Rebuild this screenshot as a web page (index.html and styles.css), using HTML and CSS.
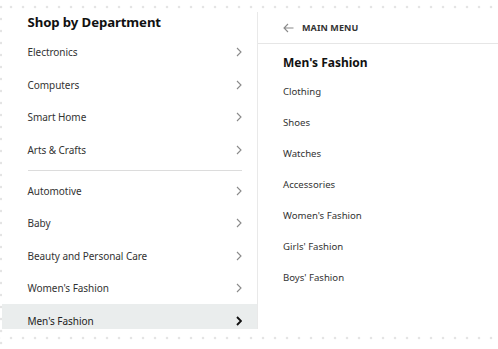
FILE: index.html
```html
<!DOCTYPE html>
<html>
<head>
<meta charset="utf-8">
<link rel="stylesheet" href="styles.css">
</head>
<body>
<div class="frame">
  <nav class="dept">
    <h2 class="dept-title">Shop by Department</h2>
    <ul class="dept-list">
      <li class="dept-item"><span>Electronics</span><svg class="chev" viewBox="0 0 6 10"><path d="M1 1L5 5L1 9"/></svg></li>
      <li class="dept-item"><span>Computers</span><svg class="chev" viewBox="0 0 6 10"><path d="M1 1L5 5L1 9"/></svg></li>
      <li class="dept-item"><span>Smart Home</span><svg class="chev" viewBox="0 0 6 10"><path d="M1 1L5 5L1 9"/></svg></li>
      <li class="dept-item"><span>Arts &amp; Crafts</span><svg class="chev" viewBox="0 0 6 10"><path d="M1 1L5 5L1 9"/></svg></li>
    </ul>
    <hr class="dept-divider">
    <ul class="dept-list">
      <li class="dept-item"><span>Automotive</span><svg class="chev" viewBox="0 0 6 10"><path d="M1 1L5 5L1 9"/></svg></li>
      <li class="dept-item"><span>Baby</span><svg class="chev" viewBox="0 0 6 10"><path d="M1 1L5 5L1 9"/></svg></li>
      <li class="dept-item"><span>Beauty and Personal Care</span><svg class="chev" viewBox="0 0 6 10"><path d="M1 1L5 5L1 9"/></svg></li>
      <li class="dept-item"><span>Women's Fashion</span><svg class="chev" viewBox="0 0 6 10"><path d="M1 1L5 5L1 9"/></svg></li>
      <li class="dept-item active"><span>Men's Fashion</span><svg class="chev" viewBox="0 0 6 10"><path d="M1 1L5 5L1 9"/></svg></li>
    </ul>
  </nav>
  <section class="sub">
    <div class="sub-head">
      <svg class="back" viewBox="0 0 11 10"><path d="M1 5H10.5M5 1L1 5L5 9"/></svg>
      <span class="sub-head-label">MAIN MENU</span>
    </div>
    <h3 class="sub-title">Men's Fashion</h3>
    <ul class="sub-list">
      <li class="sub-item">Clothing</li>
      <li class="sub-item">Shoes</li>
      <li class="sub-item">Watches</li>
      <li class="sub-item">Accessories</li>
      <li class="sub-item">Women's Fashion</li>
      <li class="sub-item">Girls' Fashion</li>
      <li class="sub-item">Boys' Fashion</li>
    </ul>
  </section>
</div>
</body>
</html>
```
FILE: styles.css
```css
html, body {
  margin: 0;
  padding: 0;
}
body {
  width: 498px;
  height: 349px;
  overflow: hidden;
  font-family: "Noto Sans", "Open Sans", sans-serif;
  color: #333;
  background-color: #fff;
  background-image:
    url("data:image/svg+xml,%3Csvg xmlns='http://www.w3.org/2000/svg' width='12' height='12'%3E%3Cpath d='M6 4.8v2.4M4.8 6h2.4' stroke='%23d6d6d6' stroke-width='0.8'/%3E%3C/svg%3E"),
    url("data:image/svg+xml,%3Csvg xmlns='http://www.w3.org/2000/svg' width='12' height='12'%3E%3Cpath d='M6 4.8v2.4M4.8 6h2.4' stroke='%23d6d6d6' stroke-width='0.8'/%3E%3C/svg%3E"),
    url("data:image/svg+xml,%3Csvg xmlns='http://www.w3.org/2000/svg' width='12' height='12'%3E%3Cpath d='M6 4.8v2.4M4.8 6h2.4' stroke='%23d6d6d6' stroke-width='0.8'/%3E%3C/svg%3E");
  background-size: 12px 12px;
  background-repeat: repeat-x, repeat-x, repeat-y;
  background-position: 5px 0.5px, 5px 332px, -5px 0.5px;
}
.frame {
  display: flex;
  margin: 12px 0 0 2px;
  height: 317px;
  overflow: hidden;
  background: #fff;
}
.dept {
  width: 255px;
  flex: none;
  box-sizing: border-box;
}
.dept-title {
  margin: 0;
  padding: 1px 0 0 25.5px;
  line-height: 18px;
  height: 23.75px;
  box-sizing: border-box;
  font-size: 13.2px;
  font-weight: 700;
  color: #111;
  letter-spacing: -0.1px;
}
.dept-list {
  list-style: none;
  margin: 0;
  padding: 0;
}
.dept-item {
  display: flex;
  align-items: center;
  justify-content: space-between;
  height: 32.5px;
  padding: 0 15px 0 25.5px;
  font-size: 10px;
  color: #333;
  letter-spacing: -0.05px;
}
.dept-item.active {
  background: #eaeded;
  color: #222;
}
.chev {
  width: 6px;
  height: 10px;
  fill: none;
  stroke: #8a8a8a;
  stroke-width: 1.1;
}
.dept-item.active .chev {
  stroke: #111;
  stroke-width: 1.9;
}
.dept-divider {
  border: 0;
  border-top: 1px solid #dcdcdc;
  margin: 3.75px 15px 3.75px 25.5px;
}
.sub {
  flex: 1;
  border-left: 1px solid #e9e9e9;
}
.sub-head {
  display: flex;
  align-items: center;
  gap: 8px;
  height: 31px;
  padding-left: 25px;
  border-bottom: 1px solid #e6e6e6;
}
.back {
  width: 11px;
  height: 10px;
  fill: none;
  stroke: #8a8a8a;
  stroke-width: 1.1;
}
.sub-head-label {
  font-size: 9px;
  font-weight: 700;
  color: #333;
  letter-spacing: 0.1px;
}
.sub-title {
  margin: 9px 0 3px;
  padding-left: 25px;
  line-height: 20px;
  font-size: 12px;
  font-weight: 700;
  color: #111;
}
.sub-list {
  list-style: none;
  margin: 0;
  padding: 0;
}
.sub-item {
  height: 31px;
  line-height: 31px;
  padding-left: 25px;
  font-size: 9.6px;
  color: #333;
}
```
